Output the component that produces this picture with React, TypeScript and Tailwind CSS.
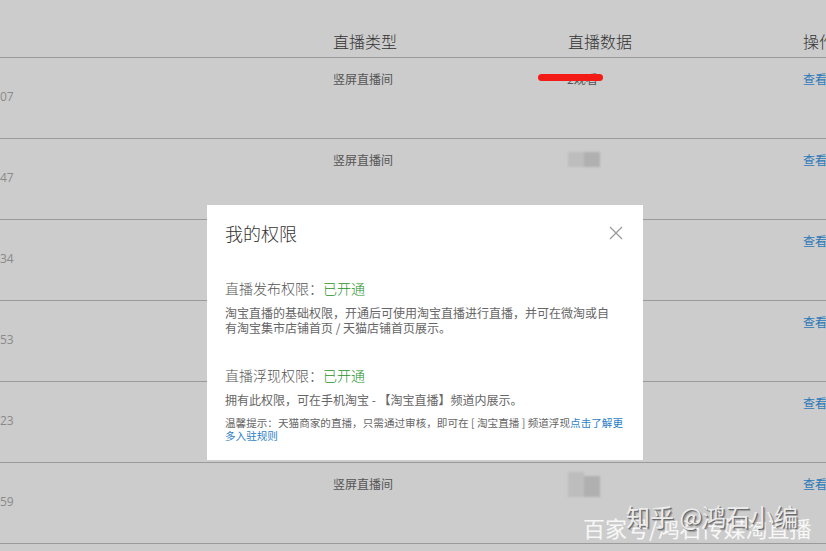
import React from "react";

const rows = [
  { time: "07", type: "竖屏直播间", data: "scribble" },
  { time: "47", type: "竖屏直播间", data: "blur" },
  { time: "34", type: "", data: "" },
  { time: "53", type: "", data: "" },
  { time: "23", type: "", data: "" },
  { time: "59", type: "竖屏直播间", data: "blur2" },
];

function DataCell({ kind }: { kind: string }) {
  if (kind === "scribble") {
    return (
      <div className="relative h-[16px]">
        <span className="absolute left-[-1px] top-0 text-[12px] leading-[16px] text-[#555]">2观看</span>
        <div className="absolute left-[-30px] top-[3px] h-[7px] w-[65px] rounded-full bg-[#f21b16]" />
      </div>
    );
  }
  if (kind === "blur") {
    return (
      <div className="flex blur-[1px]">
        <div className="h-[15px] w-[16px] bg-[#bdbdbd]" />
        <div className="h-[15px] w-[16px] bg-[#b0b0b0]" />
      </div>
    );
  }
  if (kind === "blur2") {
    return (
      <div className="flex mt-[-4px] blur-[1px]">
        <div className="h-[25px] w-[16px] bg-[#bdbdbd]" />
        <div className="mt-[4px] h-[21px] w-[16px] bg-[#b0b0b0]" />
      </div>
    );
  }
  return null;
}

export default function App() {
  return (
    <div
      className="relative w-[826px] h-[551px] overflow-hidden bg-[#cccccc] text-[#333]"
      style={{ fontFamily: '"Microsoft YaHei", "Noto Sans CJK SC", "Open Sans", sans-serif' }}
    >
      {/* Table header */}
      <div className="grid grid-cols-[333px_235px_235px_1fr] h-[58px] border-b border-[#9a9a9a] pt-[31px] text-[16px] leading-[20px] font-light text-[#333]">
        <div />
        <div>直播类型</div>
        <div>直播数据</div>
        <div className="whitespace-nowrap">操作</div>
      </div>

      {/* Table rows */}
      {rows.map((r, i) => (
        <div
          key={i}
          className="grid grid-cols-[333px_235px_235px_1fr] h-[81px] border-b border-[#9a9a9a]"
        >
          <div className="pt-[31px] text-[12px] leading-[16px] text-[#8a8a8a]" style={{ fontFamily: '"Open Sans", sans-serif' }}>{r.time}</div>
          <div className="pt-[13px] text-[12px] leading-[16px] text-[#555]">{r.type}</div>
          <div className="pt-[13px]">
            <DataCell kind={r.data} />
          </div>
          <div className="pt-[13px] text-[12px] leading-[16px] text-[#2d78b8] whitespace-nowrap">查看</div>
        </div>
      ))}

      {/* Permission modal */}
      <div className="absolute left-[207px] top-[205px] w-[436px] h-[255px] bg-white px-[18px] pt-[16px]">
        <div className="flex items-center justify-between">
          <div className="text-[18px] leading-[24px] font-light text-[#333]">我的权限</div>
          <svg width="14" height="14" viewBox="0 0 14 14" className="mr-[2px]">
            <path d="M1 1L13 13M13 1L1 13" stroke="#9a9a9a" strokeWidth="1.3" fill="none" />
          </svg>
        </div>

        <div className="mt-[33px] text-[14px] leading-[20px] font-light text-[#555]">
          直播发布权限：<span className="text-[#27922a]">已开通</span>
        </div>
        <div className="mt-[7px] text-[12px] leading-[15px] text-[#666] whitespace-nowrap">
          淘宝直播的基础权限，开通后可使用淘宝直播进行直播，并可在微淘或自
          <br />
          有淘宝集市店铺首页 / 天猫店铺首页展示。
        </div>

        <div className="mt-[30px] text-[14px] leading-[20px] font-light text-[#555]">
          直播浮现权限：<span className="text-[#27922a]">已开通</span>
        </div>
        <div className="mt-[7px] text-[12px] leading-[15px] text-[#666] whitespace-nowrap">
          拥有此权限，可在手机淘宝 - 【淘宝直播】频道内展示。
        </div>
        <div className="mt-[9px] text-[10.6px] leading-[13px] text-[#666] whitespace-nowrap">
          温馨提示：天猫商家的直播，只需通过审核，即可在 [ 淘宝直播 ] 频道浮现
          <span className="text-[#2d7fc6]">点击了解更</span>
          <br />
          <span className="text-[#2d7fc6]">多入驻规则</span>
        </div>
      </div>

      {/* Watermarks */}
      <div className="absolute left-[583px] top-[513px] text-[22px] leading-[28px] text-white/85 whitespace-nowrap">
        百家号/鸿石传媒淘直播
      </div>
      <div
        className="absolute left-[626px] top-[500px] text-[24px] leading-[32px] text-[#ececec] whitespace-nowrap"
        style={{ textShadow: "1px 1px 0 #6a6a6a, 2px 2px 1px rgba(0,0,0,0.25)" }}
      >
        知乎 @鸿石小编
      </div>
    </div>
  );
}
